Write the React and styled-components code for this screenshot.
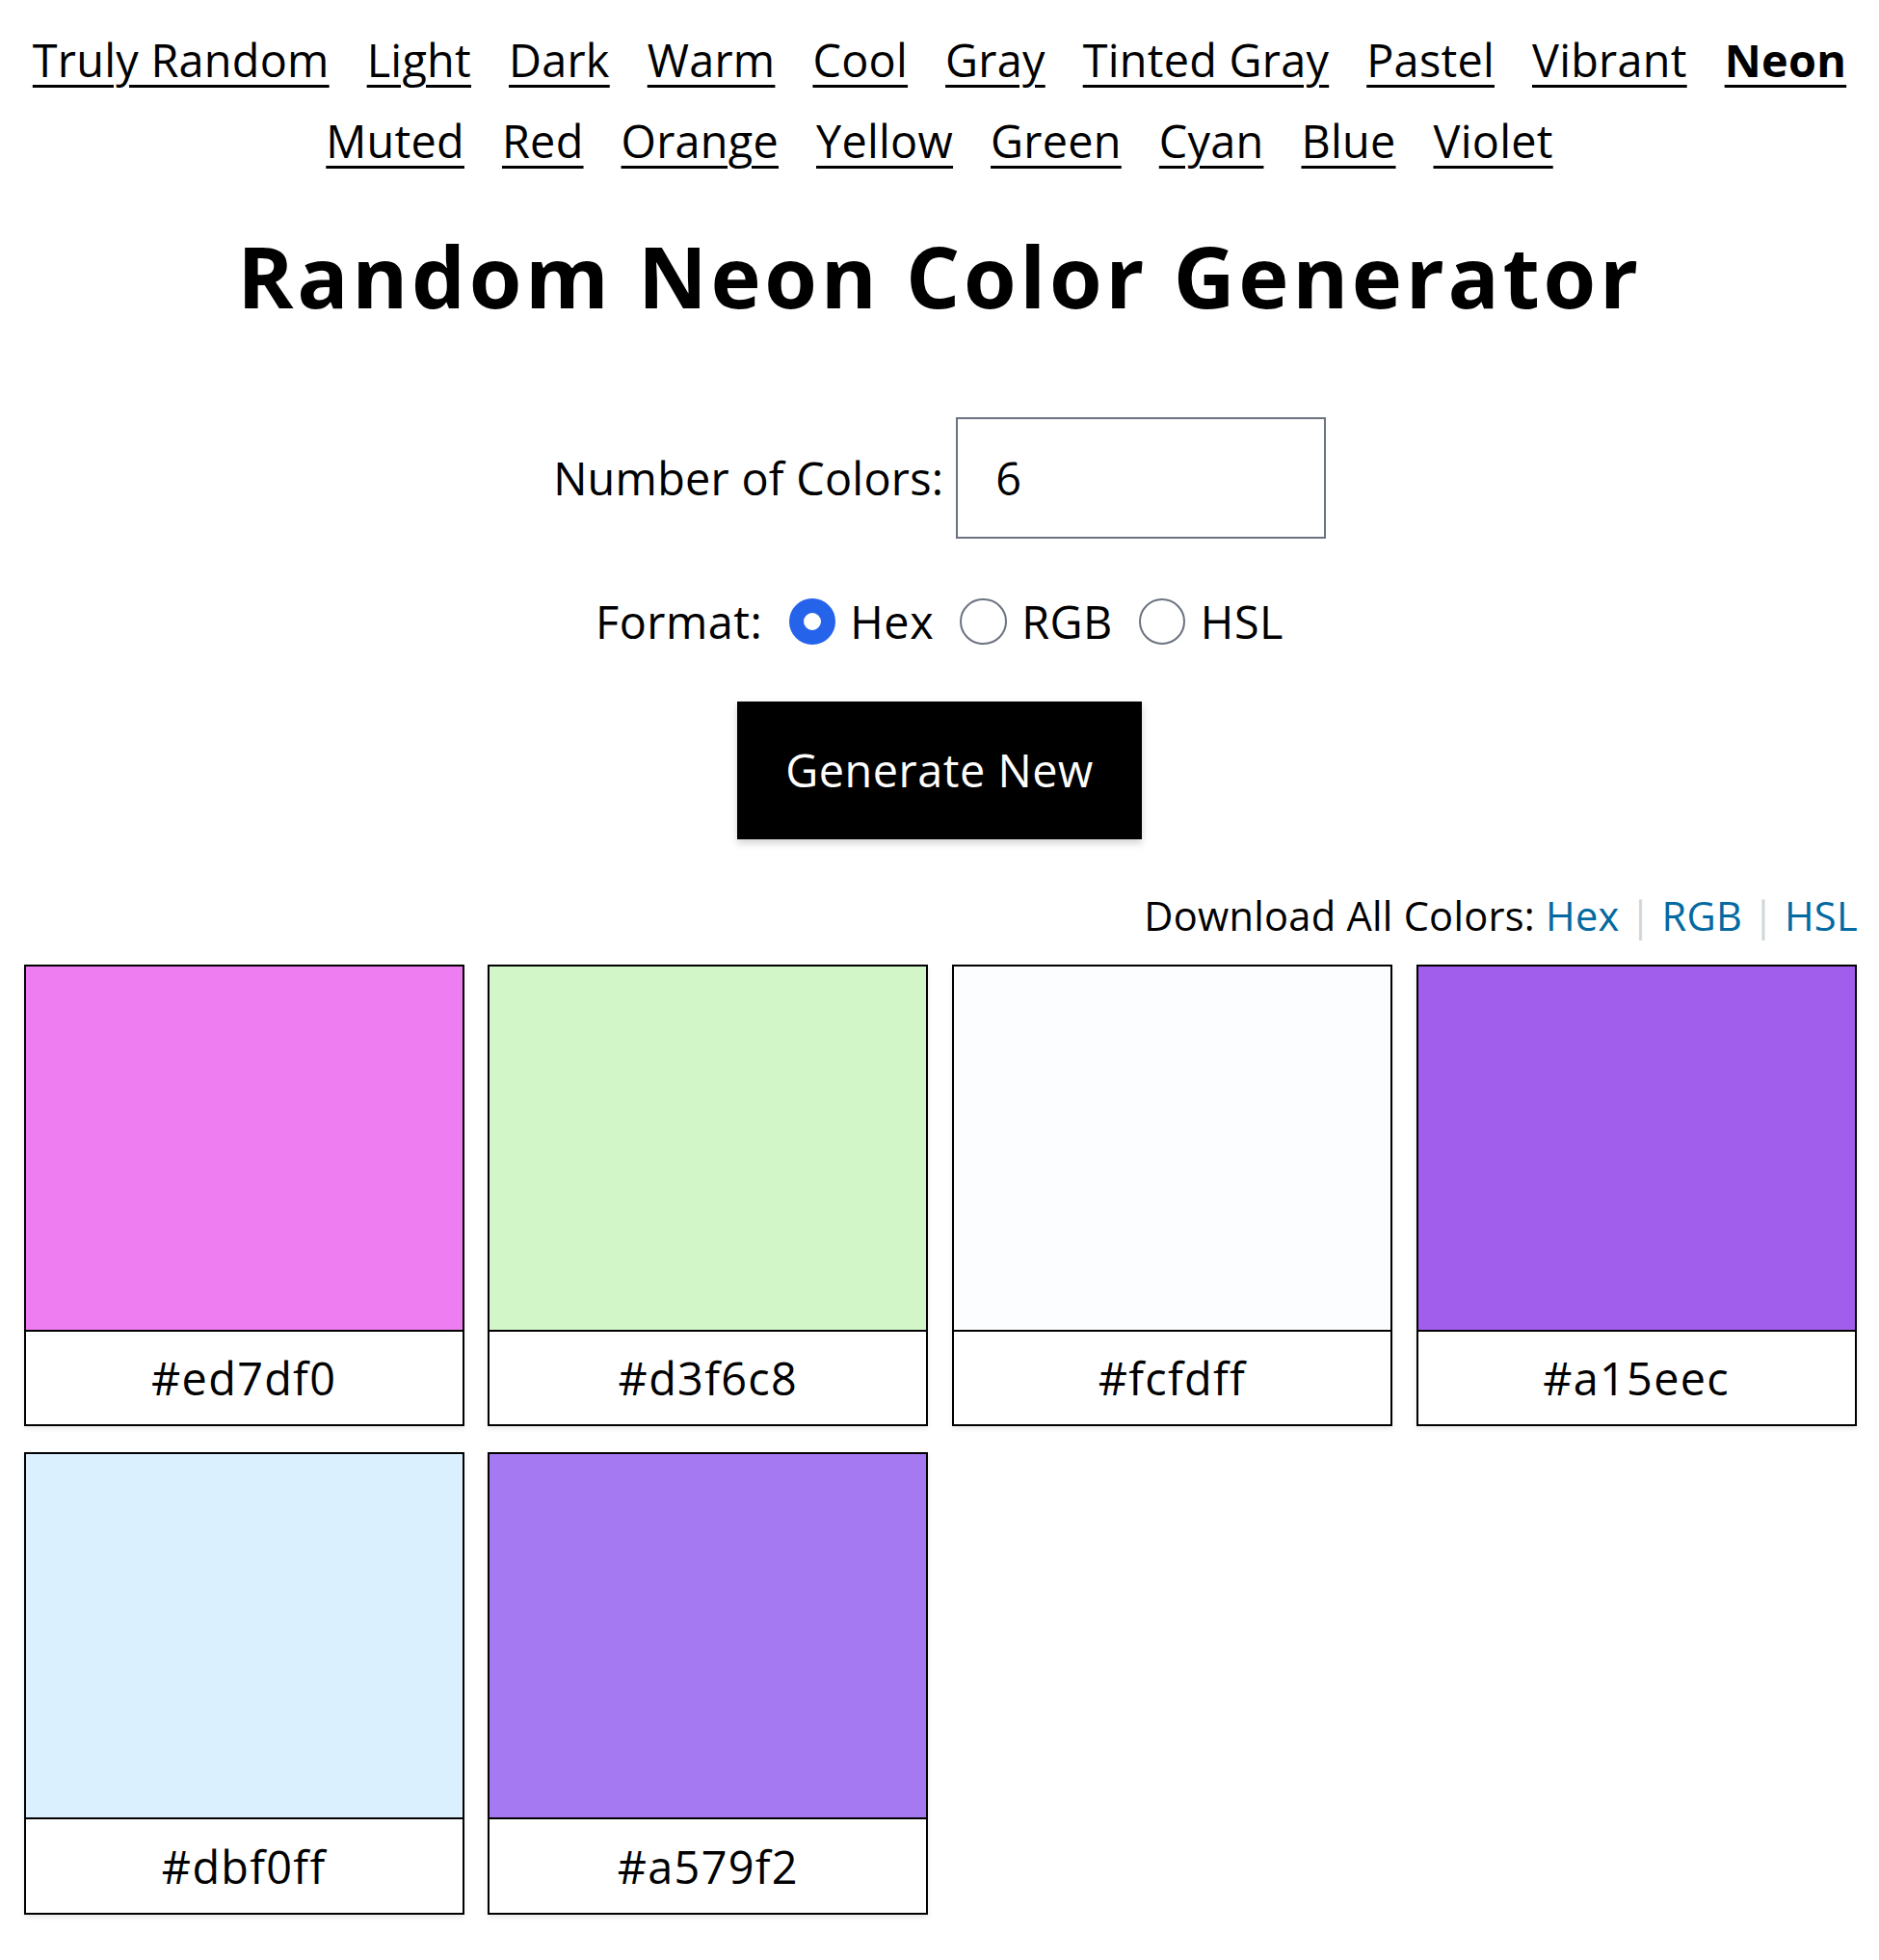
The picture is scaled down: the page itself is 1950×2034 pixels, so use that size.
import React, { useState } from "react";
import styled, { createGlobalStyle } from "styled-components";

const GlobalStyle = createGlobalStyle`
  body {
    margin: 0;
    background: #fff;
    color: #000;
    font-family: "Open Sans", "Noto Sans", sans-serif;
  }
`;

const links = [
  "Truly Random", "Light", "Dark", "Warm", "Cool", "Gray", "Tinted Gray",
  "Pastel", "Vibrant", "Neon", "Muted", "Red", "Orange", "Yellow", "Green",
  "Cyan", "Blue", "Violet",
];

const colors = ["#ed7df0", "#d3f6c8", "#fcfdff", "#a15eec", "#dbf0ff", "#a579f2"];

const App = () => {
  const [format, setFormat] = useState("hex");
  return (
    <Page>
      <GlobalStyle />
      <Nav>
        {links.map((l) => (
          <NavLink key={l} href="#" $active={l === "Neon"}>
            {l}
          </NavLink>
        ))}
      </Nav>
      <Title>Random Neon Color Generator</Title>
      <Controls>
        <FieldRow>
          <Label htmlFor="count">Number of Colors:</Label>
          <NumberInput id="count" type="text" defaultValue="6" />
        </FieldRow>
        <FormatRow>
          <span>Format:</span>
          {["hex", "rgb", "hsl"].map((f) => (
            <RadioLabel key={f}>
              <Radio
                type="radio"
                name="format"
                checked={format === f}
                onChange={() => setFormat(f)}
              />
              {f === "hex" ? "Hex" : f.toUpperCase()}
            </RadioLabel>
          ))}
        </FormatRow>
        <Button>Generate New</Button>
      </Controls>
      <Download>
        Download All Colors: <DlLink href="#">Hex</DlLink>
        <Sep>|</Sep>
        <DlLink href="#">RGB</DlLink>
        <Sep>|</Sep>
        <DlLink href="#">HSL</DlLink>
      </Download>
      <Grid>
        {colors.map((c) => (
          <Card key={c}>
            <Swatch style={{ background: c }} />
            <Code>{c}</Code>
          </Card>
        ))}
      </Grid>
    </Page>
  );
};

const Page = styled.div`
  zoom: 1.3;
  padding-bottom: 35px;
`;

const Nav = styled.nav`
  display: flex;
  flex-wrap: wrap;
  justify-content: center;
  row-gap: 13px;
  padding: 22px 8px 0;
`;

const NavLink = styled.a`
  color: #000;
  font-size: 36px;
  line-height: 52px;
  margin: 0 15px;
  letter-spacing: 0.2px;
  font-weight: ${(p) => (p.$active ? 700 : 400)};
  text-decoration: underline;
  text-decoration-thickness: 2px;
  text-underline-offset: 6px;
`;

const Title = styled.h1`
  margin: 41px 0 0;
  text-align: center;
  font-size: 68px;
  line-height: 80px;
  font-weight: 700;
  letter-spacing: 2.8px;
`;

const Controls = styled.div`
  display: flex;
  flex-direction: column;
  align-items: center;
  font-size: 36px;
`;

const FieldRow = styled.div`
  display: flex;
  align-items: center;
  gap: 10px;
  margin-top: 73px;
`;

const Label = styled.label`
  letter-spacing: 0.2px;
`;

const NumberInput = styled.input`
  box-sizing: border-box;
  width: 295px;
  height: 97px;
  border: 2px solid #6b7280;
  padding: 0 30px;
  font: inherit;
  font-size: 36px;
  color: #000;
  outline: none;
`;

const FormatRow = styled.div`
  display: flex;
  align-items: center;
  height: 52px;
  margin-top: 40px;
  gap: 21px;
  letter-spacing: 0.4px;
`;

const RadioLabel = styled.label`
  display: flex;
  align-items: center;
  gap: 12px;
`;

const Radio = styled.input`
  appearance: none;
  margin: 0;
  width: 37px;
  height: 37px;
  border-radius: 50%;
  box-sizing: border-box;
  border: 2px solid #6b7280;
  background: #fff;
  &:checked {
    border: 12px solid #2563eb;
    background: #fff;
  }
`;

const Button = styled.button`
  margin-top: 38px;
  width: 323px;
  height: 110px;
  border: 0;
  background: #000;
  color: #fff;
  font: inherit;
  font-size: 36px;
  letter-spacing: 0.4px;
  box-shadow: 0 3px 6px rgba(0, 0, 0, 0.18);
  cursor: pointer;
`;

const Download = styled.div`
  margin-top: 36px;
  padding-right: 17px;
  text-align: right;
  font-size: 32px;
  line-height: 50px;
  letter-spacing: 0.2px;
`;

const DlLink = styled.a`
  color: #0369a1;
  text-decoration: none;
`;

const Sep = styled.span`
  color: #d1d5db;
  margin: 0 8px;
`;

const Grid = styled.div`
  display: grid;
  grid-template-columns: repeat(4, 1fr);
  gap: 21px 19px;
  padding: 0 18px 0 19px;
  margin-top: 14px;
`;

const Card = styled.div`
  border: 2px solid #000;
  box-shadow: 0 2px 4px rgba(0, 0, 0, 0.08);
  display: flex;
  flex-direction: column;
`;

const Swatch = styled.div`
  height: 290px;
  border-bottom: 2px solid #000;
`;

const Code = styled.div`
  height: 74px;
  display: flex;
  align-items: center;
  justify-content: center;
  font-size: 36px;
  letter-spacing: 1px;
`;

export default App;
